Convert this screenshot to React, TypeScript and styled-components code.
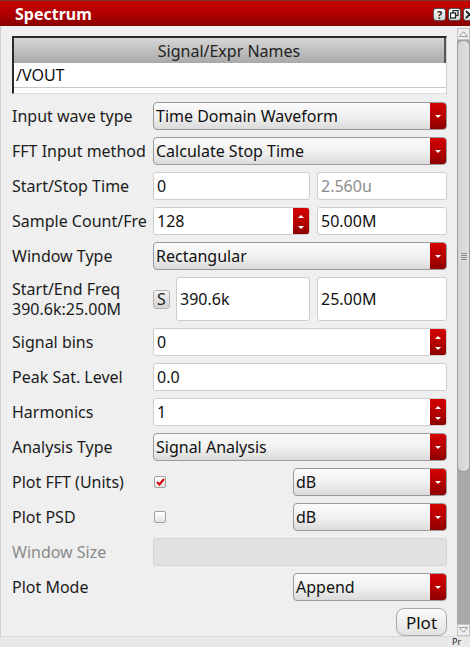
import React from 'react';
import styled, { createGlobalStyle } from 'styled-components';

const Global = createGlobalStyle`
  html, body { margin: 0; padding: 0; background: #efefef; }
  body { font-family: "Noto Sans", "Open Sans", sans-serif; }
`;

const Window = styled.div`
  width: 470px;
  height: 647px;
  display: flex;
  flex-direction: column;
  overflow: hidden;
  background: #efefef;
`;

const TitleBar = styled.div`
  height: 26px;
  flex: none;
  display: flex;
  align-items: center;
  padding-left: 15px;
  background: linear-gradient(#c80000, #b00000 50%, #880000);
  border-top: 1px solid #7a3a3a;
  box-sizing: border-box;
`;

const Title = styled.div`
  flex: 1;
  color: #fff;
  font-weight: 700;
  font-size: 16px;
`;

const TitleButtons = styled.div`
  display: flex;
  gap: 2px;
  margin-right: -6px;
  margin-top: 2px;
`;

const TitleBtn = styled.div`
  width: 13px;
  height: 13px;
  border-radius: 3px;
  background: linear-gradient(#ffffff, #d8d8d8);
  border: 1px solid #555;
  box-sizing: border-box;
  display: flex;
  align-items: center;
  justify-content: center;
  font-size: 11px;
  font-weight: 700;
  color: #222;
  line-height: 1;
`;

const Body = styled.div`
  flex: 1;
  display: flex;
  min-height: 0;
  border-left: 1px solid #cfcfcf;
`;

const Content = styled.div`
  flex: 1;
  padding: 10px 10px 0 11px;
  display: flex;
  flex-direction: column;
  gap: 7px;
`;

const Table = styled.div`
  height: 59px;
  box-sizing: border-box;
  border-top: 2px solid #2a2a2a;
  border-left: 2px solid #2a2a2a;
  border-right: 1px solid #cfcfcf;
  border-bottom: 1px solid #dcdcdc;
  background: #fff;
  margin-bottom: 1px;
`;

const TableHead = styled.div`
  height: 25px;
  background: linear-gradient(#d6d6d6, #a9a9a9);
  border-right: 2px solid #555;
  display: flex;
  align-items: center;
  justify-content: center;
  font-size: 16px;
  color: #222;
`;

const TableCell = styled.div`
  height: 24px;
  border-bottom: 1px solid #c8c8c8;
  display: flex;
  align-items: center;
  padding-left: 2px;
  font-size: 16px;
  color: #111;
`;

const Row = styled.div<{ $tall?: boolean }>`
  display: grid;
  grid-template-columns: 141px 1fr;
  align-items: center;
  height: ${(p) => (p.$tall ? 44 : 28)}px;
`;

const Label = styled.div<{ $disabled?: boolean }>`
  font-size: 16px;
  color: ${(p) => (p.$disabled ? '#8a8a8a' : '#1c1c1c')};
  line-height: 20px;
  white-space: nowrap;
  overflow: hidden;
`;

const Fields = styled.div`
  display: flex;
  gap: 7px;
  height: 100%;
  align-items: center;
`;

const ComboBox = styled.div<{ $width?: number }>`
  height: 28px;
  box-sizing: border-box;
  ${(p) => (p.$width ? `width: ${p.$width}px; margin-left: auto;` : 'flex: 1;')}
  border: 1px solid #9a9a9a;
  border-radius: 4px;
  background: linear-gradient(#fbfbfb, #f0f0f0 55%, #dadada);
  display: flex;
  align-items: center;
  overflow: hidden;
  font-size: 16px;
  color: #111;
`;

const ComboText = styled.div`
  flex: 1;
  padding-left: 2px;
`;

const RedBtn = styled.div`
  width: 16px;
  align-self: stretch;
  background: linear-gradient(#d40000, #b00000 60%, #8c0000);
  display: flex;
  flex-direction: column;
  align-items: center;
  justify-content: center;
`;

const Tri = styled.div<{ $up?: boolean }>`
  width: 0;
  height: 0;
  border-left: 3px solid transparent;
  border-right: 3px solid transparent;
  ${(p) => (p.$up ? 'border-bottom: 3px solid #fff;' : 'border-top: 3px solid #fff;')}
`;

const SpinBtn = styled(RedBtn)`
  justify-content: space-between;
  padding: 7px 0 5px;
  box-sizing: border-box;
`;

const LineEdit = styled.div<{ $grey?: boolean; $disabled?: boolean; $h?: number; $w?: number }>`
  ${(p) => (p.$w ? `width: ${p.$w}px; flex: none;` : 'flex: 1;')}
  height: ${(p) => p.$h ?? 28}px;
  box-sizing: border-box;
  border: 1px solid ${(p) => (p.$disabled ? '#d4d4d4' : '#cdcdcd')};
  border-radius: 3px;
  background: ${(p) => (p.$disabled ? '#e1e1e1' : '#fff')};
  display: flex;
  align-items: center;
  font-size: 16px;
  color: ${(p) => (p.$grey ? '#8c8c8c' : '#111')};
  overflow: hidden;
`;

const EditText = styled.div`
  flex: 1;
  padding-left: 3px;
`;

const SButton = styled.div`
  width: 17px;
  height: 19px;
  flex: none;
  margin-right: -1px;
  box-sizing: border-box;
  border: 1px solid #b4b4b4;
  border-radius: 3px;
  background: linear-gradient(#f2f2f2, #d2d2d2);
  display: flex;
  align-items: center;
  justify-content: center;
  font-size: 16px;
  color: #222;
`;

const CheckBox = styled.div`
  width: 12px;
  height: 12px;
  margin-left: 1px;
  box-sizing: border-box;
  border: 1px solid #a0a0a0;
  border-radius: 2px;
  background: linear-gradient(#ffffff, #e2e2e2);
  display: flex;
  align-items: center;
  justify-content: center;
`;

const PlotButton = styled.div`
  width: 51px;
  height: 28px;
  margin-left: auto;
  box-sizing: border-box;
  border: 1px solid #a8a8a8;
  border-radius: 8px;
  background: linear-gradient(#fafafa, #e2e2e2);
  display: flex;
  align-items: center;
  justify-content: center;
  font-size: 17px;
  color: #111;
`;

const ButtonRow = styled.div`
  display: flex;
  height: 28px;
`;

const ScrollBar = styled.div`
  width: 13px;
  flex: none;
  margin-top: 2px;
  background: #a9a9a9;
  display: flex;
  flex-direction: column;
`;

const Arrow = styled.div`
  height: 12px;
  background: #ececec;
  border: 1px solid #c4c4c4;
  box-sizing: border-box;
  display: flex;
  align-items: center;
  justify-content: center;
`;

const ArrowSpacer = styled.div`
  flex: 1;
`;

const Handle = styled.div`
  height: 432px;
  background: linear-gradient(90deg, #d4d4d4, #e0e0e0);
  border: 1px solid #9c9c9c;
  border-radius: 6px;
  box-sizing: border-box;
  display: flex;
  align-items: center;
  justify-content: center;
`;

const Grip = styled.div`
  width: 6px;
  height: 7px;
  background: repeating-linear-gradient(#8c8c8c 0 1px, transparent 1px 2px);
`;

const StatusBar = styled.div`
  height: 11px;
  flex: none;
  border-top: 1px solid #d8d8d8;
  background: #e9e9e9;
  box-sizing: border-box;
  padding-left: 452px;
  font-size: 9px;
  line-height: 10px;
  overflow: hidden;
  color: #222;
`;

function Combo({ text, width }: { text: string; width?: number }) {
  return (
    <ComboBox $width={width}>
      <ComboText>{text}</ComboText>
      <RedBtn>
        <Tri />
      </RedBtn>
    </ComboBox>
  );
}

function Spin({ value, width }: { value: string; width?: number }) {
  return (
    <LineEdit $w={width}>
      <EditText>{value}</EditText>
      <SpinBtn>
        <Tri $up />
        <Tri />
      </SpinBtn>
    </LineEdit>
  );
}

function Edit({ value, grey, width, h }: { value: string; grey?: boolean; width?: number; h?: number }) {
  return (
    <LineEdit $grey={grey} $w={width} $h={h}>
      <EditText>{value}</EditText>
    </LineEdit>
  );
}

function Check({ on }: { on?: boolean }) {
  return (
    <CheckBox>
      {on && (
        <svg width="9" height="8" viewBox="0 0 9 8">
          <path d="M1 4 L3.5 6.5 L8 1" stroke="#d00000" strokeWidth="2" fill="none" />
        </svg>
      )}
    </CheckBox>
  );
}

export default function App() {
  return (
    <Window>
      <Global />
      <TitleBar>
        <Title>Spectrum</Title>
        <TitleButtons>
          <TitleBtn>?</TitleBtn>
          <TitleBtn>
            <svg width="9" height="9" viewBox="0 0 9 9">
              <rect x="3" y="0.5" width="5" height="5" fill="none" stroke="#222" strokeWidth="1.2" />
              <rect x="0.5" y="3" width="5" height="5" fill="#fff" stroke="#222" strokeWidth="1.2" />
            </svg>
          </TitleBtn>
          <TitleBtn>
            <svg width="9" height="9" viewBox="0 0 9 9">
              <path d="M1 1 L8 8 M8 1 L1 8" stroke="#222" strokeWidth="1.8" />
            </svg>
          </TitleBtn>
        </TitleButtons>
      </TitleBar>
      <Body>
        <Content>
          <Table>
            <TableHead>Signal/Expr Names</TableHead>
            <TableCell>/VOUT</TableCell>
          </Table>
          <Row>
            <Label>Input wave type</Label>
            <Combo text="Time Domain Waveform" />
          </Row>
          <Row>
            <Label>FFT Input method</Label>
            <Combo text="Calculate Stop Time" />
          </Row>
          <Row>
            <Label>Start/Stop Time</Label>
            <Fields>
              <Edit value="0" />
              <Edit value="2.560u" grey width={130} />
            </Fields>
          </Row>
          <Row>
            <Label>Sample Count/Fre</Label>
            <Fields>
              <Spin value="128" />
              <Edit value="50.00M" width={130} />
            </Fields>
          </Row>
          <Row>
            <Label>Window Type</Label>
            <Combo text="Rectangular" />
          </Row>
          <Row $tall>
            <Label>
              Start/End Freq
              <br />
              390.6k:25.00M
            </Label>
            <Fields>
              <SButton>S</SButton>
              <Edit value="390.6k" h={44} />
              <Edit value="25.00M" h={44} width={130} />
            </Fields>
          </Row>
          <Row>
            <Label>Signal bins</Label>
            <Fields>
              <Spin value="0" />
            </Fields>
          </Row>
          <Row>
            <Label>Peak Sat. Level</Label>
            <Fields>
              <Edit value="0.0" />
            </Fields>
          </Row>
          <Row>
            <Label>Harmonics</Label>
            <Fields>
              <Spin value="1" />
            </Fields>
          </Row>
          <Row>
            <Label>Analysis Type</Label>
            <Combo text="Signal Analysis" />
          </Row>
          <Row>
            <Label>Plot FFT (Units)</Label>
            <Fields>
              <Check on />
              <Combo text="dB" width={154} />
            </Fields>
          </Row>
          <Row>
            <Label>Plot PSD</Label>
            <Fields>
              <Check />
              <Combo text="dB" width={154} />
            </Fields>
          </Row>
          <Row>
            <Label $disabled>Window Size</Label>
            <Fields>
              <LineEdit $disabled />
            </Fields>
          </Row>
          <Row>
            <Label>Plot Mode</Label>
            <Fields>
              <Combo text="Append" width={154} />
            </Fields>
          </Row>
          <ButtonRow>
            <PlotButton>Plot</PlotButton>
          </ButtonRow>
        </Content>
        <ScrollBar>
          <Arrow>
            <svg width="9" height="6" viewBox="0 0 9 6">
              <path d="M0.5 5.5 L4.5 0.8 L8.5 5.5 Z" fill="#f4f4f4" stroke="#9a9a9a" />
            </svg>
          </Arrow>
          <Handle>
            <Grip />
          </Handle>
          <ArrowSpacer />
          <Arrow>
            <svg width="9" height="6" viewBox="0 0 9 6">
              <path d="M0.5 0.5 L4.5 5.2 L8.5 0.5 Z" fill="#f4f4f4" stroke="#9a9a9a" />
            </svg>
          </Arrow>
        </ScrollBar>
      </Body>
      <StatusBar>Pr</StatusBar>
    </Window>
  );
}
